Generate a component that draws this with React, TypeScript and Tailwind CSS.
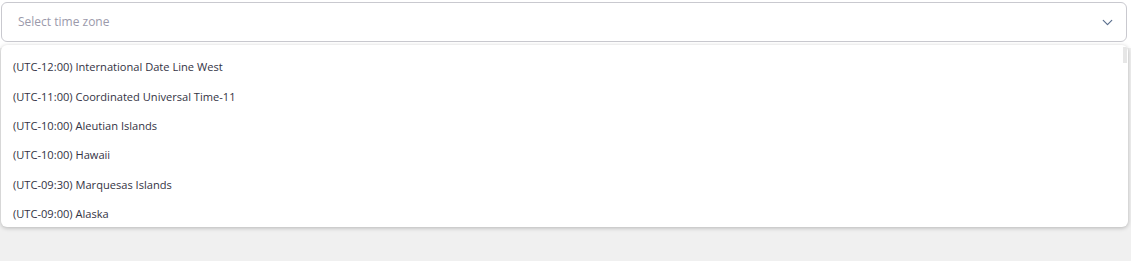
import { ChevronDown } from 'lucide-react';

const zones = [
  '(UTC-12:00) International Date Line West',
  '(UTC-11:00) Coordinated Universal Time-11',
  '(UTC-10:00) Aleutian Islands',
  '(UTC-10:00) Hawaii',
  '(UTC-09:30) Marquesas Islands',
  '(UTC-09:00) Alaska',
];

export default function App() {
  return (
    <div className="h-[261px] w-full bg-[#f0f0f0] font-['Open_Sans',sans-serif]">
      <div className="relative bg-white pt-[2px] pl-[1px] pr-[4px] pb-[6px]">
        <div className="flex h-[40px] items-center justify-between rounded-md border border-[#c9c9cf] bg-white pl-[16px] pr-[10px]">
          <span className="text-[12px] text-[#9b9aab]">Select time zone</span>
          <ChevronDown className="h-[17px] w-[17px] text-[#5b6f8e]" strokeWidth={1.7} />
        </div>

        {/* dropdown */}
        <div className="absolute left-[1px] right-[3px] top-[45px] h-[182px] overflow-hidden rounded-md bg-white shadow-[0_1px_4px_rgba(0,0,0,0.25)]">
          <div className="absolute right-[1px] top-[2px] h-[16px] w-[4px] bg-[#e6e6e6]" />
          <ul className="pt-[8px]">
            {zones.map((z) => (
              <li key={z} className="flex h-[29.3px] items-center pl-[12px] text-[11.1px] text-[#333344]">
                {z}
              </li>
            ))}
          </ul>
        </div>
      </div>
    </div>
  );
}
